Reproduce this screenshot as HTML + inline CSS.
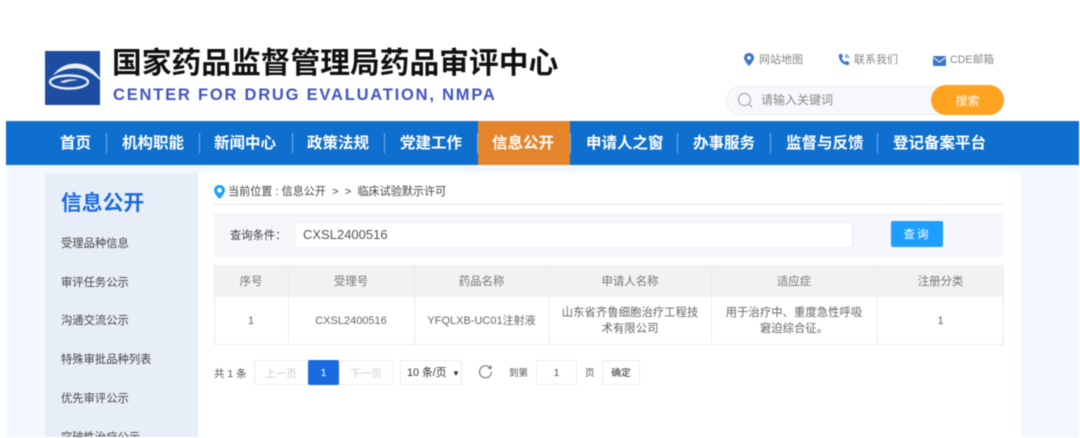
<!DOCTYPE html>
<html lang="zh"><head><meta charset="utf-8"><title>信息公开</title>
<style>
html,body{margin:0;padding:0;background:#fff}
#p{position:relative;width:1080px;height:438px;overflow:hidden;background:#fff;font-family:"Liberation Sans","Noto Sans CJK SC",sans-serif;filter:blur(.45px)}
#p div,#p span.a{position:absolute;white-space:nowrap;box-sizing:border-box}
.nav{top:122px;height:44px;line-height:44px;color:#fff;font-size:15.5px;font-weight:700}
.sep{top:133px;width:1px;height:20px;background:#7fb0e0}
.side{left:61px;font-size:11.3px;color:#444;line-height:16px}
.th{top:266px;height:32px;line-height:32px;text-align:center;font-size:11.4px;color:#777}
.td{top:297px;height:48px;text-align:center;font-size:11.4px;color:#666;display:flex;align-items:center;justify-content:center;line-height:16px;padding:0 12px;white-space:normal!important}
.vl{top:265px;height:79px;width:1px;background:#ececec}
.pg{font-size:10.5px;color:#555;line-height:24px;height:24px;top:362px}
.bx{top:360px;height:25px;border:1px solid #ececec;background:#fff;border-radius:2px;text-align:center;line-height:25px;font-size:10.5px}
.top{top:53px;font-size:11px;color:#888;line-height:14px}
</style></head><body><div id="p">

<!-- logo -->
<div style="left:45px;top:51px;width:55px;height:54px;background:#1c4da1"></div>
<svg style="position:absolute;left:45px;top:51px" width="60" height="54" viewBox="0 0 60 54">
<path d="M8 25C14 14 28 10 40 14C48 17 54 25 59 33C52 26 45 20 36 18C26 16 15 19 8 25Z" fill="#e8eef6"/>
<ellipse cx="24" cy="31" rx="19" ry="6.500" fill="none" stroke="#e6edf5" stroke-width="2.400"/>
<path d="M41 24C47 27 48 32 44 38" fill="none" stroke="#1c4da1" stroke-width="3"/>
<path d="M15 31C20 28 28 28 33 29C28 30 24 30 22 31C20 32 17 32 15 31Z" fill="#dfe8f2"/>
</svg>

<!-- title -->
<div style="left:112px;top:46px;font-size:29.750px;line-height:36px;font-weight:700;color:#111">国家药品监督管理局药品审评中心</div>
<div style="left:113px;top:85px;font-size:16.500px;line-height:20px;font-weight:700;color:#4254c4;letter-spacing:1.790px">CENTER FOR DRUG EVALUATION, NMPA</div>

<!-- top links -->
<svg style="position:absolute;left:744px;top:53px" width="10" height="13" viewBox="0 0 10 13"><path d="M5 0C2 0 0 2.200 0 4.800C0 8 5 13 5 13C5 13 10 8 10 4.800C10 2.200 8 0 5 0Z" fill="#3b78c4"/><circle cx="5" cy="4.800" r="1.800" fill="#fff"/></svg>
<div class="top" style="left:759px">网站地图</div>
<svg style="position:absolute;left:838px;top:53px" width="12" height="13" viewBox="0 0 12 13"><path d="M1 1.500L3.500 .5L5 3.500L3.700 5C4.400 6.800 5.600 8.200 7.300 9L8.800 7.800L11.500 9.600L10.500 12C5 12.500 0 7 1 1.500Z" fill="#3b78c4"/><path d="M7 1.500C9 1.800 10.300 3 10.700 5M7 3.500C8 3.700 8.600 4.300 8.800 5" fill="none" stroke="#3b78c4"/></svg>
<div class="top" style="left:854px">联系我们</div>
<svg style="position:absolute;left:933px;top:56px" width="13" height="10" viewBox="0 0 13 10"><rect width="13" height="10" rx="1" fill="#3b78c4"/><path d="M.5 1.500L6.500 6L12.500 1.500" fill="none" stroke="#fff"/></svg>
<div class="top" style="left:950px;font-size:10.700px">CDE邮箱</div>

<!-- search -->
<div style="left:726px;top:86px;width:240px;height:29px;background:#f7f8fb;border:1px solid #eceef2;border-radius:15px"></div>
<svg style="position:absolute;left:737px;top:92px" width="17" height="17" viewBox="0 0 17 17"><circle cx="7.500" cy="7.500" r="6" fill="none" stroke="#aaa" stroke-width="1.200"/><path d="M12 12L15 15.500" stroke="#aaa" stroke-width="1.200"/></svg>
<div style="left:761px;top:92px;font-size:12px;line-height:17px;color:#888">请输入关键词</div>
<div style="left:931px;top:85px;width:73px;height:30px;background:#ffa321;border-radius:15px;color:#fff;font-size:12px;line-height:32px;text-align:center">搜索</div>

<!-- nav -->
<div style="left:6px;top:121px;width:1073px;height:44px;background:#0e6fce"></div>
<div style="left:478px;top:121px;width:92px;height:44px;background:#e5852b"></div>
<div class="nav" style="left:60px">首页</div>
<div class="nav" style="left:122px">机构职能</div>
<div class="nav" style="left:214px">新闻中心</div>
<div class="nav" style="left:307px">政策法规</div>
<div class="nav" style="left:400px">党建工作</div>
<div class="nav" style="left:492px">信息公开</div>
<div class="nav" style="left:586px">申请人之窗</div>
<div class="nav" style="left:693px">办事服务</div>
<div class="nav" style="left:786px">监督与反馈</div>
<div class="nav" style="left:893px">登记备案平台</div>
<div class="sep" style="left:106px"></div><div class="sep" style="left:199px"></div><div class="sep" style="left:292px"></div><div class="sep" style="left:384px"></div><div class="sep" style="left:477px"></div><div class="sep" style="left:570px"></div><div class="sep" style="left:677px"></div><div class="sep" style="left:770px"></div><div class="sep" style="left:877px"></div>

<!-- body bg -->
<div style="left:6px;top:165px;width:1073px;height:272px;background:#f3f8fe"></div>
<div style="left:45px;top:173px;width:153px;height:264px;background:#e8eef7"></div>
<div style="left:198px;top:173px;width:823px;height:264px;background:#fff"></div>

<!-- sidebar -->
<div style="left:61px;top:191px;font-size:20.800px;line-height:26px;font-weight:700;color:#1a6be0">信息公开</div>
<div class="side" style="top:236px">受理品种信息</div>
<div class="side" style="top:275px">审评任务公示</div>
<div class="side" style="top:313px">沟通交流公示</div>
<div class="side" style="top:352px">特殊审批品种列表</div>
<div class="side" style="top:391px">优先审评公示</div>
<div style="left:45px;top:430px;width:153px;height:7px;overflow:hidden"><span class="a" style="left:16px;top:0;font-size:11.300px;line-height:16px;color:#444;white-space:nowrap">突破性治疗公示</span></div>

<!-- breadcrumb -->
<svg style="position:absolute;left:214px;top:185px" width="11" height="14" viewBox="0 0 11 14"><path d="M5.500 0C2.500 0 0 2.300 0 5.300C0 9 5.500 14 5.500 14C5.500 14 11 9 11 5.300C11 2.300 8.500 0 5.500 0Z" fill="#1e9fff"/><circle cx="5.500" cy="5.300" r="2.400" fill="#fff"/></svg>
<div style="left:228px;top:185px;font-size:11.100px;line-height:15px;color:#444">当前位置 : 信息公开&nbsp; &gt;&nbsp; &gt;&nbsp; 临床试验默示许可</div>
<div style="left:214px;top:204px;width:790px;height:1px;background:#e8e8e8"></div>

<!-- query -->
<div style="left:214px;top:213px;width:790px;height:44px;background:#f4f6fa"></div>
<div style="left:230px;top:228px;font-size:11.300px;line-height:16px;color:#444">查询条件：</div>
<div style="left:295px;top:222px;width:558px;height:26px;background:#fff;border:1px solid #eef0f3;border-radius:2px"></div>
<div style="left:303px;top:226px;font-size:13px;line-height:18px;color:#555">CXSL2400516</div>
<div style="left:891px;top:221px;width:52px;height:26px;background:#1e9fff;border-radius:2px;color:#fff;font-size:11.500px;line-height:28px;text-align:center;letter-spacing:2px">查询</div>

<!-- table -->
<div style="left:214px;top:265px;width:790px;height:32px;background:#f2f2f2"></div>
<div style="left:214px;top:265px;width:790px;height:80px;border:1px solid #ececec"></div>
<div class="vl" style="left:288px"></div><div class="vl" style="left:414px"></div><div class="vl" style="left:549px"></div><div class="vl" style="left:711px"></div><div class="vl" style="left:877px"></div>
<div class="th" style="left:214px;width:74px">序号</div>
<div class="th" style="left:288px;width:126px">受理号</div>
<div class="th" style="left:414px;width:135px">药品名称</div>
<div class="th" style="left:549px;width:162px">申请人名称</div>
<div class="th" style="left:711px;width:166px">适应症</div>
<div class="th" style="left:877px;width:127px">注册分类</div>
<div class="td" style="left:214px;width:74px">1</div>
<div class="td" style="left:288px;width:126px;font-size:11px">CXSL2400516</div>
<div class="td" style="left:414px;width:135px;padding:0;font-size:11px">YFQLXB-UC01注射液</div>
<div class="td" style="left:549px;width:162px">山东省齐鲁细胞治疗工程技术有限公司</div>
<div class="td" style="left:711px;width:166px">用于治疗中、重度急性呼吸窘迫综合征。</div>
<div class="td" style="left:877px;width:127px">1</div>

<!-- pagination -->
<div class="pg" style="left:214px">共 1 条</div>
<div class="bx" style="left:254px;width:139px"></div>
<div class="pg" style="left:254px;width:54px;text-align:center;color:#ccc">上一页</div>
<div style="left:308px;top:360px;width:31px;height:25px;background:#1a6be0;border-radius:2px;color:#fff;font-size:10.500px;line-height:26px;text-align:center">1</div>
<div class="pg" style="left:339px;width:54px;text-align:center;color:#ccc">下一页</div>
<div class="bx" style="left:400px;width:62px;color:#333;text-align:left;padding-left:6px;font-size:10.800px">10 条/页<span class="a" style="left:51px;top:0;font-size:8px">▼</span></div>
<svg style="position:absolute;left:478px;top:364px" width="15" height="15" viewBox="0 0 15 15"><path d="M12.500 4.500A6 6 0 1 0 13.500 8" fill="none" stroke="#777" stroke-width="1.200"/><path d="M9.500 4.800L13.500 5L13.500 1Z" fill="#777"/></svg>
<div class="pg" style="left:509px;font-size:9.500px">到第</div>
<div class="bx" style="left:536px;width:41px;color:#555">1</div>
<div class="pg" style="left:585px;font-size:9.500px">页</div>
<div class="bx" style="left:602px;width:38px;color:#333;font-size:9.800px">确定</div>
</div></body></html>
